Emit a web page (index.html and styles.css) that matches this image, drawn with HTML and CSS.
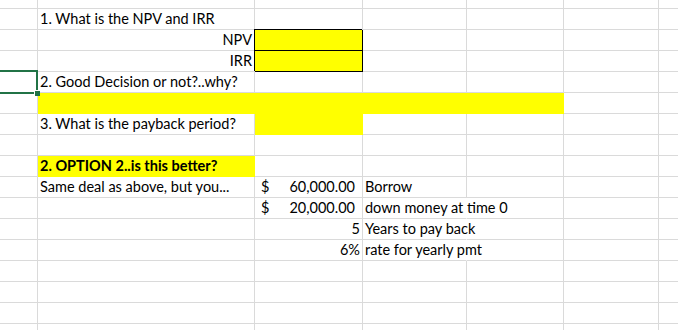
FILE: index.html
```html
<!DOCTYPE html>
<html>
<head>
<meta charset="utf-8">
<link rel="stylesheet" href="styles.css">
</head>
<body>
<div class="sheet">
  <!-- row 0 -->
  <div class="c"></div><div class="c"></div><div class="c"></div><div class="c"></div><div class="c"></div><div class="c"></div><div class="c"></div>
  <!-- row 1 -->
  <div class="c"></div><div class="c">1. What is the NPV and IRR</div><div class="c"></div><div class="c"></div><div class="c"></div><div class="c"></div><div class="c"></div>
  <!-- row 2 -->
  <div class="c"></div><div class="c r">NPV</div><div class="c box"></div><div class="c"></div><div class="c"></div><div class="c"></div><div class="c"></div>
  <!-- row 3 -->
  <div class="c"></div><div class="c r">IRR</div><div class="c box"></div><div class="c"></div><div class="c"></div><div class="c"></div><div class="c"></div>
  <!-- row 4 -->
  <div class="c"></div><div class="c">2. Good Decision or not?..why?</div><div class="c"></div><div class="c"></div><div class="c"></div><div class="c"></div><div class="c"></div>
  <!-- row 5 -->
  <div class="c"></div><div class="c y"></div><div class="c y"></div><div class="c y"></div><div class="c y"></div><div class="c"></div><div class="c"></div>
  <!-- row 6 -->
  <div class="c"></div><div class="c">3. What is the payback period?</div><div class="c y"></div><div class="c"></div><div class="c"></div><div class="c"></div><div class="c"></div>
  <!-- row 7 -->
  <div class="c"></div><div class="c"></div><div class="c"></div><div class="c"></div><div class="c"></div><div class="c"></div><div class="c"></div>
  <!-- row 8 -->
  <div class="c"></div><div class="c y b">2. OPTION 2..is this better?</div><div class="c"></div><div class="c"></div><div class="c"></div><div class="c"></div><div class="c"></div>
  <!-- row 9 -->
  <div class="c"></div><div class="c">Same deal as above, but you...</div><div class="c acct"><span>$</span><span>60,000.00</span></div><div class="c">Borrow</div><div class="c"></div><div class="c"></div><div class="c"></div>
  <!-- row 10 -->
  <div class="c"></div><div class="c"></div><div class="c acct"><span>$</span><span>20,000.00</span></div><div class="c ov">down money at time 0</div><div class="c"></div><div class="c"></div><div class="c"></div>
  <!-- row 11 -->
  <div class="c"></div><div class="c"></div><div class="c r">5</div><div class="c ov">Years to pay back</div><div class="c"></div><div class="c"></div><div class="c"></div>
  <!-- row 12 -->
  <div class="c"></div><div class="c"></div><div class="c r">6%</div><div class="c ov">rate for yearly pmt</div><div class="c"></div><div class="c"></div><div class="c"></div>
  <!-- row 13 -->
  <div class="c"></div><div class="c"></div><div class="c"></div><div class="c"></div><div class="c"></div><div class="c"></div><div class="c"></div>
  <!-- row 14 -->
  <div class="c"></div><div class="c"></div><div class="c"></div><div class="c"></div><div class="c"></div><div class="c"></div><div class="c"></div>
  <!-- row 15 -->
  <div class="c"></div><div class="c"></div><div class="c"></div><div class="c"></div><div class="c"></div><div class="c"></div><div class="c"></div>
  <!-- row 16 -->
  <div class="c"></div><div class="c"></div><div class="c"></div><div class="c"></div><div class="c"></div><div class="c"></div><div class="c"></div>

  <div class="selection"></div>
  <div class="handle"></div>
</div>
</body>
</html>
```
FILE: styles.css
```css
html, body {
  margin: 0;
  padding: 0;
  background: #fff;
  overflow: hidden;
}

.sheet {
  position: relative;
  width: 678px;
  height: 330px;
  overflow: hidden;
  display: grid;
  grid-template-columns: 38px 217px 108px 104px 97px 95px 40px;
  grid-template-rows: 9px repeat(16, 21px);
  font-family: Lato, "Open Sans", sans-serif;
  font-size: 14.5px;
  color: #000;
}

.c {
  box-sizing: border-box;
  border-right: 1px solid #dadada;
  border-bottom: 1px solid #dadada;
  line-height: 20px;
  white-space: nowrap;
  padding: 0 2px;
}

.r {
  text-align: right;
}

.b {
  font-weight: bold;
}

.y {
  background: #ffff00;
  border-right-color: #ffff00;
  border-bottom-color: #ffff00;
}

.box {
  background: #ffff00;
  border-right-color: #000;
  border-bottom-color: #000;
  box-shadow: -1px -1px 0 #000;
}

.ov {
  border-right-color: transparent;
}

.acct {
  display: flex;
  justify-content: space-between;
  padding: 0 7px 0 6px;
}

.selection {
  position: absolute;
  left: -3px;
  top: 70px;
  width: 41px;
  height: 24px;
  box-sizing: border-box;
  border: 2px solid #217346;
}

.handle {
  position: absolute;
  left: 34px;
  top: 90px;
  width: 5px;
  height: 5px;
  background: #217346;
  border: 1px solid #fff;
  border-right: 0;
  border-bottom: 0;
}
```
